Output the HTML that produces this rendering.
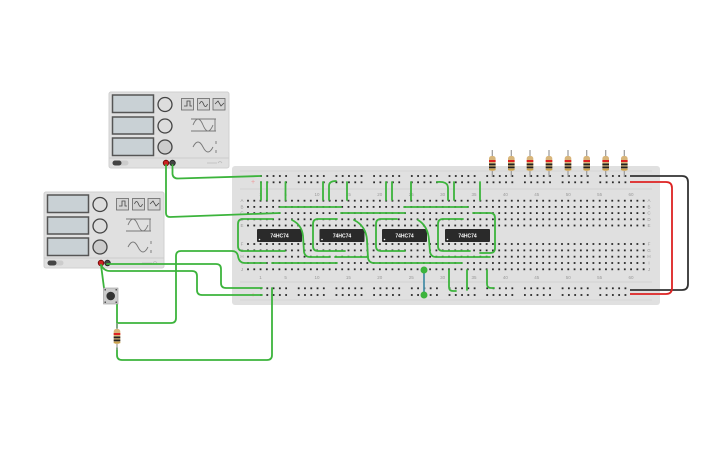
<!DOCTYPE html>
<html><head><meta charset="utf-8"><style>
html,body{margin:0;padding:0;background:#fff;width:725px;height:453px;overflow:hidden}
svg{display:block}
</style></head><body>
<svg id="s" width="725" height="453" viewBox="0 0 725 453" xmlns="http://www.w3.org/2000/svg" font-family="Liberation Sans, sans-serif">
<defs>
<g id="fg">
  <rect x="109" y="92" width="120" height="76" rx="2" fill="#e0e0e0" stroke="#d0d0d0"/>
  <rect x="112.5" y="95" width="41" height="17.5" fill="#c9d1d5" stroke="#555" stroke-width="1.5"/>
  <rect x="112.5" y="117" width="41" height="17" fill="#c9d1d5" stroke="#555" stroke-width="1.5"/>
  <rect x="112.5" y="138" width="41" height="17.5" fill="#c9d1d5" stroke="#555" stroke-width="1.5"/>
  <circle cx="165" cy="104.5" r="7" fill="#ddd" stroke="#444" stroke-width="1.3"/>
  <circle cx="165" cy="126" r="7" fill="#ddd" stroke="#444" stroke-width="1.3"/>
  <circle cx="165" cy="147" r="7" fill="#ccc" stroke="#444" stroke-width="1.3"/>
  <rect x="181.5" y="98.5" width="12" height="11.5" fill="#d4d4d4" stroke="#666" stroke-width=".8"/>
  <rect x="197.5" y="98.5" width="12" height="11.5" fill="#d4d4d4" stroke="#666" stroke-width=".8"/>
  <rect x="213" y="98.5" width="12" height="11.5" fill="#d4d4d4" stroke="#666" stroke-width=".8"/>
  <path d="M184,106 h3 v-5 h3 v5 h2" fill="none" stroke="#444" stroke-width=".8"/>
  <path d="M199.5,104 q2,-5 4,0 t4,0" fill="none" stroke="#444" stroke-width=".8"/>
  <path d="M215,104 l3,-3 l3,5 l3,-3" fill="none" stroke="#444" stroke-width=".8"/>
  <path d="M193,125 q5,-12 10,0 t10,0 M191,119 h25 M191,131 h25 M215,119 v12" fill="none" stroke="#777" stroke-width=".9"/>
  <path d="M193,147 q5,-10 10,0 t10,0 M216,141 v3 M216,150 v3" fill="none" stroke="#777" stroke-width=".9"/>
  <line x1="109" y1="158" x2="229" y2="158" stroke="#ccc"/>
  <rect x="112.5" y="160.5" width="16" height="5" rx="2.5" fill="#ccc"/>
  <rect x="112.5" y="160.5" width="9" height="5" rx="2.5" fill="#444"/>
  <path d="M207,163 h10 M218,163 q2,-3 4,0" stroke="#bbb" fill="none" stroke-width=".7"/>
  <circle cx="166" cy="163" r="2.8" fill="#c22" stroke="#600" stroke-width=".8"/>
  <circle cx="172.5" cy="163" r="2.8" fill="#444" stroke="#222" stroke-width=".8"/>
</g>
<g id="res">
  <line x1="0" y1="-3" x2="0" y2="24" stroke="#999" stroke-width="1.2"/>
  <rect x="-3.3" y="3" width="6.6" height="15" rx="2.5" fill="#d8b57a"/>
  <rect x="-3.3" y="7" width="6.6" height="2" fill="#d22"/>
  <rect x="-3.3" y="10.5" width="6.6" height="1.8" fill="#222"/>
  <rect x="-3.3" y="13.5" width="6.6" height="1.8" fill="#222"/>
  <rect x="-3.3" y="16" width="6.6" height="1.2" fill="#c9a24a"/>
</g>
</defs>
<use href="#fg"/>
<use href="#fg" transform="translate(-65,100)"/>

<rect x="232" y="166" width="428" height="139" rx="3" fill="#e0e0e0"/>
<line x1="240" y1="189" x2="652" y2="189" stroke="#d2d2d2"/>
<line x1="240" y1="282" x2="652" y2="282" stroke="#d2d2d2"/>
<line x1="240" y1="171" x2="652" y2="171" stroke="#d6d6d6"/>
<line x1="240" y1="300" x2="652" y2="300" stroke="#d6d6d6"/>
<text x="251" y="184" font-size="7" fill="#e99">+</text>
<text x="251" y="297" font-size="7" fill="#e99">+</text>
<g id="holes" fill="#2a2a2a"></g>
<g id="labels" font-size="4.5" fill="#999"></g>

<g fill="#2a2a2a">
  <rect x="257" y="229" width="45" height="13" rx="1"/>
  <rect x="319.5" y="229" width="45" height="13" rx="1"/>
  <rect x="382" y="229" width="45" height="13" rx="1"/>
  <rect x="445" y="229" width="45" height="13" rx="1"/>
</g>
<g font-size="5" fill="#fff" text-anchor="middle" font-weight="bold">
  <text x="279.5" y="237.5">74HC74</text><text x="342" y="237.5">74HC74</text>
  <text x="404.5" y="237.5">74HC74</text><text x="467.5" y="237.5">74HC74</text>
</g>
<g fill="#fff"><circle cx="259.5" cy="239.5" r=".8"/><circle cx="322" cy="239.5" r=".8"/><circle cx="384.5" cy="239.5" r=".8"/><circle cx="447.5" cy="239.5" r=".8"/></g>

<g fill="none" stroke="#3cb43c" stroke-width="1.8" stroke-linecap="round" stroke-linejoin="round">
  <path d="M172.5,165 L172.5,174 Q173,178.5 178,178.5 L261,176"/>
  <path d="M166,165 L166,213 Q166,217 170,217 L280,213"/>
  <path d="M261,182 V200 M267,182 V200 M285.5,182 V200 M323,182 V200 M336,181 Q329,181 329,186 V200 M347,182 V200 M386,182 V200 M392,182 V200 M411,182 V200 M437,182 Q448,181 448,188 V200 M454,182 V200 M480,182 V200"/>
  <path d="M280,207 H341 M404,207 H468 M341,213 H405 M473,213 H490 Q495,213 495,218 V248 Q495,253 490,253 H480"/>
  <path d="M273,219 H243 Q238,219 238,224 V246 Q238,251 243,251 H285"/>
  <path d="M337,219 H318 Q313,219 313,224 V246 Q313,251 318,251 H345"/>
  <path d="M397,219 H381 Q376,219 376,224 V246 Q376,251 381,251 H405"/>
  <path d="M463,219 H443 Q438,219 438,224 V246 Q438,251 443,251 H470"/>
  <path d="M292,220 Q302,225 303,236 L304,252 Q305,257 310,257 H330"/>
  <path d="M354,220 Q366,226 367,240 L368,258 Q369,263 374,263 H397"/>
  <path d="M418,220 Q428,226 429,240 L430,252 Q431,257 436,257 H462"/>
  <path d="M335,257 H368 M463,257 H490 M272,263 H337 M397,263 H462"/>
  <path d="M449,270 V287 Q449,291 453,291 H456 M467,270 V290 M487,270 V284 Q487,288 491,288 H494"/>
  <path d="M107,264 H216 Q221,264 221,269 V283 Q221,288 226,288 H262"/>
  <path d="M101,265 Q104,271 110,271 H192 Q197,271 197,276 V290 Q197,295 202,295 H262"/>
  <path d="M101,265 L104,288"/>
  <path d="M117,304 V328 M117,323 H171 Q176,323 176,318 V256 Q176,251 181,251 H232 Q237,251 238,256 Q239,263 245,263 H266"/>
  <path d="M117,348 V355 Q117,360 122,360 H267 Q272,360 272,355 V288"/>
</g>
<line x1="424" y1="270" x2="424" y2="295" stroke="#4a90a8" stroke-width="1.8"/>
<circle cx="424" cy="270" r="3.5" fill="#3cb43c"/><circle cx="424" cy="295" r="3.5" fill="#3cb43c"/>
<path d="M630,176 H682 Q688,176 688,182 V284 Q688,290 682,290 H630" fill="none" stroke="#333" stroke-width="1.8"/>
<path d="M630,182 H666 Q672,182 672,188 V288 Q672,294 666,294 H630" fill="none" stroke="#dd2222" stroke-width="1.8"/>

<g>
  <use href="#res" transform="translate(492.3,153)"/><use href="#res" transform="translate(511.3,153)"/>
  <use href="#res" transform="translate(530,153)"/><use href="#res" transform="translate(549,153)"/>
  <use href="#res" transform="translate(568,153)"/><use href="#res" transform="translate(586.7,153)"/>
  <use href="#res" transform="translate(605.7,153)"/><use href="#res" transform="translate(624.3,153)"/>
  <use href="#res" transform="translate(117,326)"/>
</g>
<rect x="103.5" y="288" width="14.5" height="16" fill="#ccc" stroke="#999" stroke-width=".6"/>
<circle cx="110.7" cy="296" r="4.3" fill="#333"/>
<g fill="#555"><rect x="104.5" y="289" width="1.5" height="1.5"/><rect x="115.5" y="289" width="1.5" height="1.5"/><rect x="104.5" y="301.5" width="1.5" height="1.5"/><rect x="115.5" y="301.5" width="1.5" height="1.5"/></g>
</svg>
<script>
var ns="http://www.w3.org/2000/svg",h=document.getElementById("holes"),lb=document.getElementById("labels");
function r(x,y){var e=document.createElementNS(ns,"rect");e.setAttribute("x",(x-0.9).toFixed(2));e.setAttribute("y",(y-0.9).toFixed(2));e.setAttribute("width","1.8");e.setAttribute("height","1.8");h.appendChild(e);}
var rows=[200.7,206.9,213.1,219.3,225.5,244,250.4,256.7,263,269.3];
for(var i=0;i<64;i++){var x=248+i*6.28;for(var j=0;j<10;j++)r(x,rows[j]);}
for(var g=0;g<10;g++)for(var k=0;k<5;k++){var x=261+g*37.7+k*6.28;[176,182.3,288.3,295].forEach(function(y){r(x,y);});}
function t(x,y,s){var e=document.createElementNS(ns,"text");e.setAttribute("x",x);e.setAttribute("y",y);e.setAttribute("text-anchor","middle");e.textContent=s;lb.appendChild(e);}
[1,5,10,15,20,25,30,35,40,45,50,55,60].forEach(function(n){var x=260.5+(n-1)*6.28;t(x,196,n);t(x,279,n);});
"ABCDE".split("").forEach(function(c,i){t(242,rows[i]+1.5,c);t(649,rows[i]+1.5,c);});
"FGHIJ".split("").forEach(function(c,i){t(242,rows[i+5]+1.5,c);t(649,rows[i+5]+1.5,c);});
</script>
</body></html>
